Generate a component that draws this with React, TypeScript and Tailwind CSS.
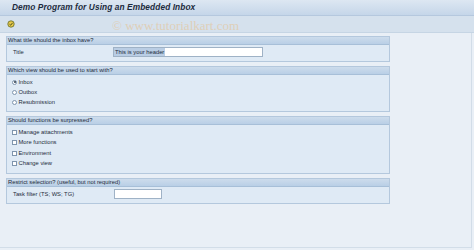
import React from 'react';

const font = { fontFamily: '"Liberation Sans", Tahoma, sans-serif' };

function Group({ title, children }: { title: string; children: React.ReactNode }) {
  return (
    <div className="w-[384px] border border-[#b4c8dd] bg-[#dfeaf5]">
      <div className="h-[8px] flex items-center px-[1px] bg-gradient-to-b from-[#cddcec] to-[#b9cfe6] border-b border-[#a7bfd8] text-[5.8px] leading-none text-[#1d2b3a]">
        {title}
      </div>
      <div className="pl-[5px] pt-[2px] pb-[4px]">{children}</div>
    </div>
  );
}

function Radio({ label, checked }: { label: string; checked?: boolean }) {
  return (
    <div className="h-[10px] flex items-center gap-[1.5px] text-[5.8px] text-[#1d2b3a]">
      <span className="w-[5px] h-[5px] rounded-full border border-[#7f95ad] bg-white flex items-center justify-center">
        {checked && <span className="w-[2px] h-[2px] rounded-full bg-[#2b3b4d]" />}
      </span>
      <span>{label}</span>
    </div>
  );
}

function Check({ label }: { label: string }) {
  return (
    <div className="h-[10.5px] flex items-center gap-[1.5px] text-[5.8px] text-[#1d2b3a]">
      <span className="w-[5px] h-[5px] border border-[#7f95ad] bg-white" />
      <span>{label}</span>
    </div>
  );
}

export default function App() {
  return (
    <div className="w-[474px] h-[250px] bg-[#e9eff6] flex flex-col overflow-hidden" style={font}>
      <div className="h-[16px] flex items-center pl-[12px] bg-gradient-to-b from-[#dde7f2] to-[#c5d6e9] border-b border-[#b5c8de]">
        <span className="text-[8.3px] font-bold italic text-[#1c2a3c] tracking-[0.1px]">
          Demo Program for Using an Embedded Inbox
        </span>
      </div>
      <div className="h-[17px] flex items-center pl-[7px] bg-[#d5e1ed] border-b border-[#c6d5e4] relative">
        <svg width="8" height="8" viewBox="0 0 8 8">
          <circle cx="4" cy="4" r="3.2" fill="#e8c84a" stroke="#5f6b2a" strokeWidth="0.8" />
          <path d="M2.5 4.2 L3.7 5.2 L5.6 2.8" stroke="#3b4a1a" strokeWidth="0.9" fill="none" />
        </svg>
        <span
          className="absolute left-[112px] top-[0px] text-[13px] text-[#dfcfb8]"
          style={{ fontFamily: '"Liberation Serif", serif' }}
        >
          © www.tutorialkart.com
        </span>
      </div>
      <div className="flex-1 pl-[6px] pt-[3px] flex flex-col gap-[4px] border-r border-[#d2dde8] mr-[2px] border-b mb-[2px]">
        <Group title="What title should the inbox have?">
          <div className="h-[10px] flex items-center text-[5.8px] text-[#1d2b3a]">
            <span className="w-[101px] pl-[1px]">Title</span>
            <div className="w-[150px] h-[10px] bg-white border border-[#9fb2c6] flex items-center">
              <span className="bg-[#b9cde4] px-[1px] leading-[8px]">This is your header</span>
            </div>
          </div>
        </Group>
        <Group title="Which view should be used to start with?">
          <Radio label="Inbox" checked />
          <Radio label="Outbox" />
          <Radio label="Resubmission" />
        </Group>
        <Group title="Should functions be surpressed?">
          <Check label="Manage attachments" />
          <Check label="More functions" />
          <Check label="Environment" />
          <Check label="Change view" />
        </Group>
        <Group title="Restrict selection? (useful, but not required)">
          <div className="h-[10px] flex items-center text-[5.8px] text-[#1d2b3a]">
            <span className="w-[102px] pl-[1px]">Task filter (TS; WS; TG)</span>
            <div className="w-[48px] h-[10px] bg-white border border-[#9fb2c6]" />
          </div>
        </Group>
      </div>
    </div>
  );
}
